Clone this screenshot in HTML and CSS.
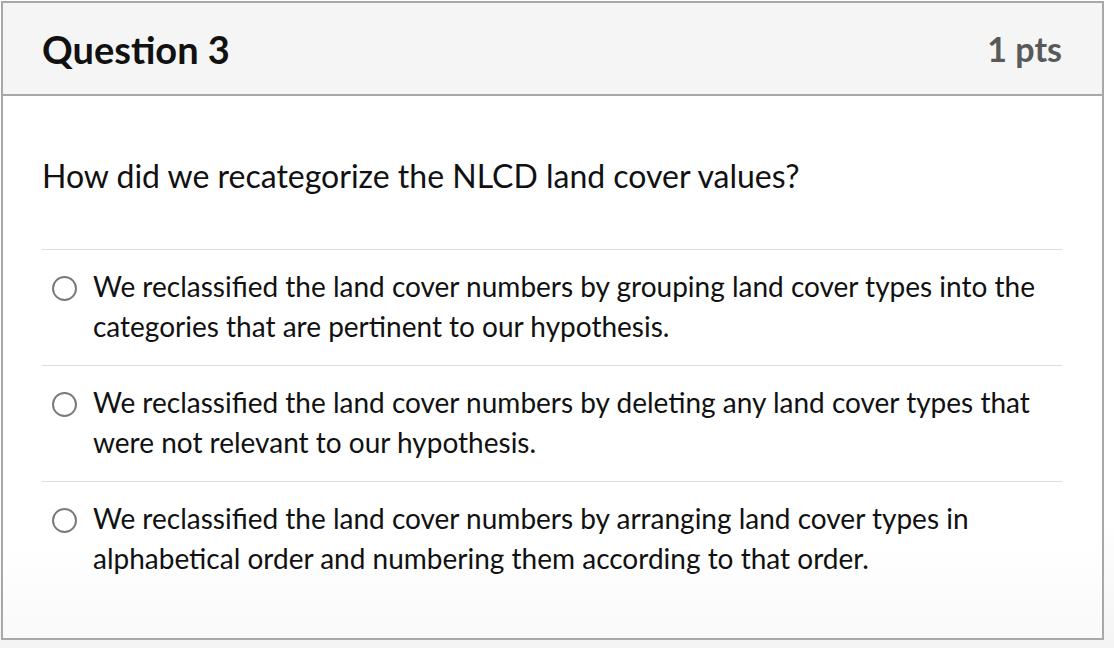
FILE: index.html
```html
<!DOCTYPE html>
<html lang="en">
<head>
<meta charset="utf-8">
<title>Question 3</title>
<link rel="stylesheet" href="styles.css">
</head>
<body>
<div class="card">
  <div class="card-header">
    <h2 class="title">Question 3</h2>
    <div class="points">1 pts</div>
  </div>
  <div class="card-body">
    <p class="question">How did we recategorize the NLCD land cover values?</p>
    <div class="answers">
      <label class="answer">
        <span class="radio"></span>
        <span class="answer-text">We reclassified the land cover numbers by grouping land cover types into the categories that are pertinent to our hypothesis.</span>
      </label>
      <label class="answer">
        <span class="radio"></span>
        <span class="answer-text">We reclassified the land cover numbers by deleting any land cover types that were not relevant to our hypothesis.</span>
      </label>
      <label class="answer">
        <span class="radio"></span>
        <span class="answer-text">We reclassified the land cover numbers by arranging land cover types in alphabetical order and numbering them according to that order.</span>
      </label>
    </div>
  </div>
</div>
</body>
</html>
```

FILE: styles.css
```css
html, body {
  margin: 0;
  padding: 0;
}
body {
  width: 1114px;
  height: 648px;
  background: linear-gradient(#ffffff 0%, #ffffff 80%, #f4f4f4 100%);
  font-family: Lato, "Noto Sans", sans-serif;
  color: #111;
  overflow: hidden;
}
.card {
  box-sizing: border-box;
  margin: 1px 0 0 1px;
  width: 1103px;
  height: 639px;
  border: 2px solid #a8a8a8;
  display: flex;
  flex-direction: column;
  background: linear-gradient(#ffffff 0%, #ffffff 85%, #f9f9f9 100%);
}
.card-header {
  box-sizing: border-box;
  height: 93px;
  background: #f5f5f5;
  border-bottom: 2px solid #a8a8a8;
  display: flex;
  align-items: center;
  justify-content: space-between;
  padding: 0 40px 0 39px;
}
.title {
  margin: 0;
  font-size: 38px;
  font-weight: 700;
  color: #111;
  line-height: 1;
}
.points {
  font-size: 34px;
  font-weight: 700;
  color: #595959;
  line-height: 1;
}
.card-body {
  padding: 0 40px 0 39px;
}
.question {
  margin: 58px 0 51px 0;
  font-size: 32px;
  line-height: 44px;
}
.answers {
  display: flex;
  flex-direction: column;
}
.answer {
  display: flex;
  align-items: flex-start;
  gap: 16px;
  border-top: 1px solid #dcdcdc;
  padding: 16px 0 19px 10px;
  font-size: 28px;
  line-height: 40px;
}
.radio {
  flex: none;
  box-sizing: border-box;
  width: 25px;
  height: 25px;
  margin-top: 10px;
  border: 2px solid #7a7a7a;
  border-radius: 50%;
  background: #fff;
}
.answer-text {
  flex: 1;
}
```
